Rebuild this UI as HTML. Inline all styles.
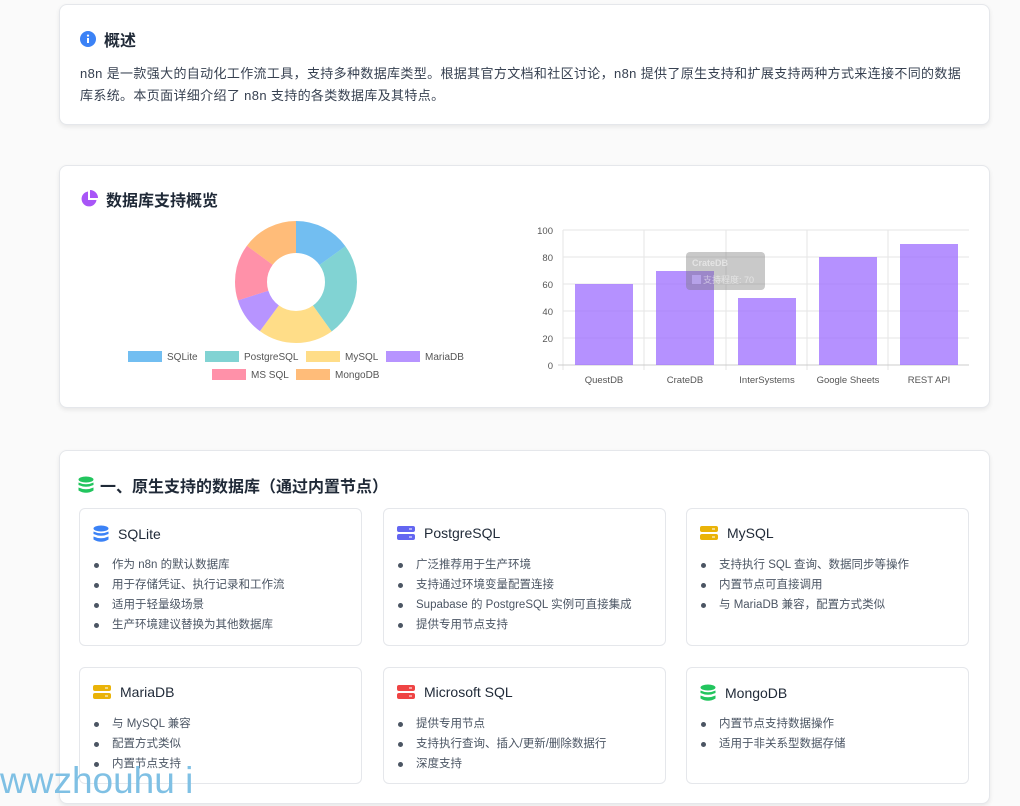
<!DOCTYPE html>
<html><head><meta charset="utf-8"><style>
*{margin:0;padding:0;box-sizing:border-box}
body{width:1020px;height:806px;overflow:hidden;background:#fafafa;font-family:"Liberation Sans","Noto Sans CJK SC",sans-serif;position:relative;color:#1f2937}
.card{position:absolute;left:59px;width:931px;background:#fff;border:1px solid #e5e7eb;border-radius:8px;box-shadow:0 2px 5px rgba(0,0,0,.08)}
.h{position:absolute;font-size:16px;font-weight:bold;color:#1f2937;display:flex;align-items:center;gap:8px;white-space:nowrap}
.p{position:absolute;left:20px;top:58px;width:890px;font-size:13px;line-height:22px;color:#374151;letter-spacing:0.35px}
.sub{position:absolute;width:283px;background:#fff;border:1px solid #e5e7eb;border-radius:6px}
.sub .t{position:absolute;left:13px;top:16px;font-size:14px;color:#1f2937;display:flex;align-items:center;gap:9px}
.sub ul{position:absolute;left:14px;top:46px;list-style:none}
.sub li{font-size:11.5px;line-height:20px;color:#4b5563;position:relative;padding-left:18px;white-space:nowrap}
.sub li:before{content:"";position:absolute;left:0;top:8px;width:5px;height:5px;border-radius:50%;background:#4b5563}
.wm{position:absolute;left:0;top:760px;font-size:37px;color:#7fc0e4;font-family:"Liberation Sans",sans-serif}
</style></head><body>

<div class="card" style="top:4px;height:121px">
<div class="h" style="left:20px;top:22px"><svg width="16" height="16"><circle cx="8" cy="8" r="8" fill="#3b82f6"/><rect x="7" y="7" width="2" height="5" fill="#fff"/><circle cx="8" cy="4.6" r="1.1" fill="#fff"/></svg>概述</div>
<div class="p">n8n 是一款强大的自动化工作流工具，支持多种数据库类型。根据其官方文档和社区讨论，n8n 提供了原生支持和扩展支持两种方式来连接不同的数据库系统。本页面详细介绍了 n8n 支持的各类数据库及其特点。</div>
</div>

<div class="card" style="top:165px;height:243px">
<div class="h" style="left:20px;top:21px"><svg width="18" height="18" viewBox="0 0 18 18"><path d="M8 1.5A7.5 7.5 0 1 0 16.5 10H8Z" fill="#a855f7"/><path d="M10 0A8 8 0 0 1 18 8H10Z" fill="#a855f7"/></svg>数据库支持概览</div>
</div>

<svg style="position:absolute;left:0;top:0" width="1020" height="420">
<g transform="rotate(-90 296 282)" fill="none" stroke-width="32">
<circle cx="296" cy="282" r="45" stroke="rgba(54,162,235,.7)" stroke-dasharray="42.4 300"/>
<circle cx="296" cy="282" r="45" stroke="rgba(75,192,192,.7)" stroke-dasharray="0 42.4 70.7 300"/>
<circle cx="296" cy="282" r="45" stroke="rgba(255,206,86,.7)" stroke-dasharray="0 113.1 56.5 300"/>
<circle cx="296" cy="282" r="45" stroke="rgba(153,102,255,.7)" stroke-dasharray="0 169.6 28.3 300"/>
<circle cx="296" cy="282" r="45" stroke="rgba(255,99,132,.7)" stroke-dasharray="0 197.9 42.4 300"/>
<circle cx="296" cy="282" r="45" stroke="rgba(255,159,64,.7)" stroke-dasharray="0 240.3 42.5 300"/>
</g>
<g font-size="10" fill="#555" font-family="Liberation Sans,sans-serif">
<rect x="128" y="351" width="34" height="11" fill="rgba(54,162,235,.7)"/><text x="167" y="360">SQLite</text>
<rect x="205" y="351" width="34" height="11" fill="rgba(75,192,192,.7)"/><text x="244" y="360">PostgreSQL</text>
<rect x="306" y="351" width="34" height="11" fill="rgba(255,206,86,.7)"/><text x="345" y="360">MySQL</text>
<rect x="386" y="351" width="34" height="11" fill="rgba(153,102,255,.7)"/><text x="425" y="360">MariaDB</text>
<rect x="212" y="369" width="34" height="11" fill="rgba(255,99,132,.7)"/><text x="251" y="378">MS SQL</text>
<rect x="296" y="369" width="34" height="11" fill="rgba(255,159,64,.7)"/><text x="335" y="378">MongoDB</text>
</g>
<g stroke="#e5e5e5" stroke-width="1">
<line x1="563" y1="230" x2="969" y2="230"/><line x1="563" y1="257" x2="969" y2="257"/><line x1="563" y1="284" x2="969" y2="284"/><line x1="563" y1="311" x2="969" y2="311"/><line x1="563" y1="338" x2="969" y2="338"/>
<line x1="563" y1="230" x2="563" y2="370"/><line x1="644" y1="230" x2="644" y2="370"/><line x1="726" y1="230" x2="726" y2="370"/><line x1="807" y1="230" x2="807" y2="370"/><line x1="888" y1="230" x2="888" y2="370"/>
</g>
<line x1="558" y1="365" x2="969" y2="365" stroke="#ccc"/>
<g fill="rgba(153,102,255,.72)">
<rect x="575" y="284" width="58" height="81"/><rect x="656" y="271" width="58" height="94"/><rect x="738" y="298" width="58" height="67"/><rect x="819" y="257" width="58" height="108"/><rect x="900" y="244" width="58" height="121"/>
</g>
<rect x="686" y="252" width="79" height="38" rx="4" fill="rgba(120,120,120,.4)"/>
<text x="692" y="266" font-size="9" fill="rgba(255,255,255,.5)" font-weight="bold">CrateDB</text>
<rect x="692" y="275" width="9" height="9" fill="rgba(200,180,255,.6)"/><text x="703" y="283" font-size="9" fill="rgba(255,255,255,.5)">支持程度: 70</text>
<g font-size="9.5" fill="#555" font-family="Liberation Sans,sans-serif" text-anchor="end">
<text x="553" y="234">100</text><text x="553" y="261">80</text><text x="553" y="288">60</text><text x="553" y="315">40</text><text x="553" y="342">20</text><text x="553" y="369">0</text>
</g>
<g font-size="9.5" fill="#555" font-family="Liberation Sans,sans-serif" text-anchor="middle">
<text x="604" y="383">QuestDB</text><text x="685" y="383">CrateDB</text><text x="767" y="383">InterSystems</text><text x="848" y="383">Google Sheets</text><text x="929" y="383">REST API</text>
</g>
</svg>

<div class="card" style="top:450px;height:354px">
<div class="h" style="left:18px;top:22px;gap:6px"><svg width="16" height="18" viewBox="0 0 16 18"><ellipse cx="8" cy="3.5" rx="7.5" ry="3" fill="#22c55e"/><path d="M.5 6.5Q8 10 15.5 6.5V9Q8 12.5 .5 9Z" fill="#22c55e"/><path d="M.5 11.5Q8 15 15.5 11.5V14.5Q8 19 .5 14.5Z" fill="#22c55e"/></svg>一、原生支持的数据库（通过内置节点）</div>
</div>

<div class="sub" style="left:79px;top:508px;height:138px"><div class="t"><svg width="16" height="18" viewBox="0 0 16 18"><ellipse cx="8" cy="3.5" rx="7.5" ry="3" fill="#3b82f6"/><path d="M.5 6.5Q8 10 15.5 6.5V9Q8 12.5 .5 9Z" fill="#3b82f6"/><path d="M.5 11.5Q8 15 15.5 11.5V14.5Q8 19 .5 14.5Z" fill="#3b82f6"/></svg>SQLite</div>
<ul><li>作为 n8n 的默认数据库</li><li>用于存储凭证、执行记录和工作流</li><li>适用于轻量级场景</li><li>生产环境建议替换为其他数据库</li></ul></div>

<div class="sub" style="left:383px;top:508px;height:138px"><div class="t"><svg width="18" height="14" viewBox="0 0 18 14"><rect x="0" y="0" width="18" height="6" rx="2" fill="#6366f1"/><rect x="0" y="8" width="18" height="6" rx="2" fill="#6366f1"/><rect x="12" y="2.5" width="3" height="1" fill="#fff"/><rect x="12" y="10.5" width="3" height="1" fill="#fff"/></svg>PostgreSQL</div>
<ul><li>广泛推荐用于生产环境</li><li>支持通过环境变量配置连接</li><li>Supabase 的 PostgreSQL 实例可直接集成</li><li>提供专用节点支持</li></ul></div>

<div class="sub" style="left:686px;top:508px;height:138px"><div class="t"><svg width="18" height="14" viewBox="0 0 18 14"><rect x="0" y="0" width="18" height="6" rx="2" fill="#eab308"/><rect x="0" y="8" width="18" height="6" rx="2" fill="#eab308"/><rect x="12" y="2.5" width="3" height="1" fill="#fff"/><rect x="12" y="10.5" width="3" height="1" fill="#fff"/></svg>MySQL</div>
<ul><li>支持执行 SQL 查询、数据同步等操作</li><li>内置节点可直接调用</li><li>与 MariaDB 兼容，配置方式类似</li></ul></div>

<div class="sub" style="left:79px;top:667px;height:117px"><div class="t"><svg width="18" height="14" viewBox="0 0 18 14"><rect x="0" y="0" width="18" height="6" rx="2" fill="#eab308"/><rect x="0" y="8" width="18" height="6" rx="2" fill="#eab308"/><rect x="12" y="2.5" width="3" height="1" fill="#fff"/><rect x="12" y="10.5" width="3" height="1" fill="#fff"/></svg>MariaDB</div>
<ul><li>与 MySQL 兼容</li><li>配置方式类似</li><li>内置节点支持</li></ul></div>

<div class="sub" style="left:383px;top:667px;height:117px"><div class="t"><svg width="18" height="14" viewBox="0 0 18 14"><rect x="0" y="0" width="18" height="6" rx="2" fill="#ef4444"/><rect x="0" y="8" width="18" height="6" rx="2" fill="#ef4444"/><rect x="12" y="2.5" width="3" height="1" fill="#fff"/><rect x="12" y="10.5" width="3" height="1" fill="#fff"/></svg>Microsoft SQL</div>
<ul><li>提供专用节点</li><li>支持执行查询、插入/更新/删除数据行</li><li>深度支持</li></ul></div>

<div class="sub" style="left:686px;top:667px;height:117px"><div class="t"><svg width="16" height="18" viewBox="0 0 16 18"><ellipse cx="8" cy="3.5" rx="7.5" ry="3" fill="#22c55e"/><path d="M.5 6.5Q8 10 15.5 6.5V9Q8 12.5 .5 9Z" fill="#22c55e"/><path d="M.5 11.5Q8 15 15.5 11.5V14.5Q8 19 .5 14.5Z" fill="#22c55e"/></svg>MongoDB</div>
<ul><li>内置节点支持数据操作</li><li>适用于非关系型数据存储</li></ul></div>

<div class="wm">wwzhouhu i</div>
</body></html>
